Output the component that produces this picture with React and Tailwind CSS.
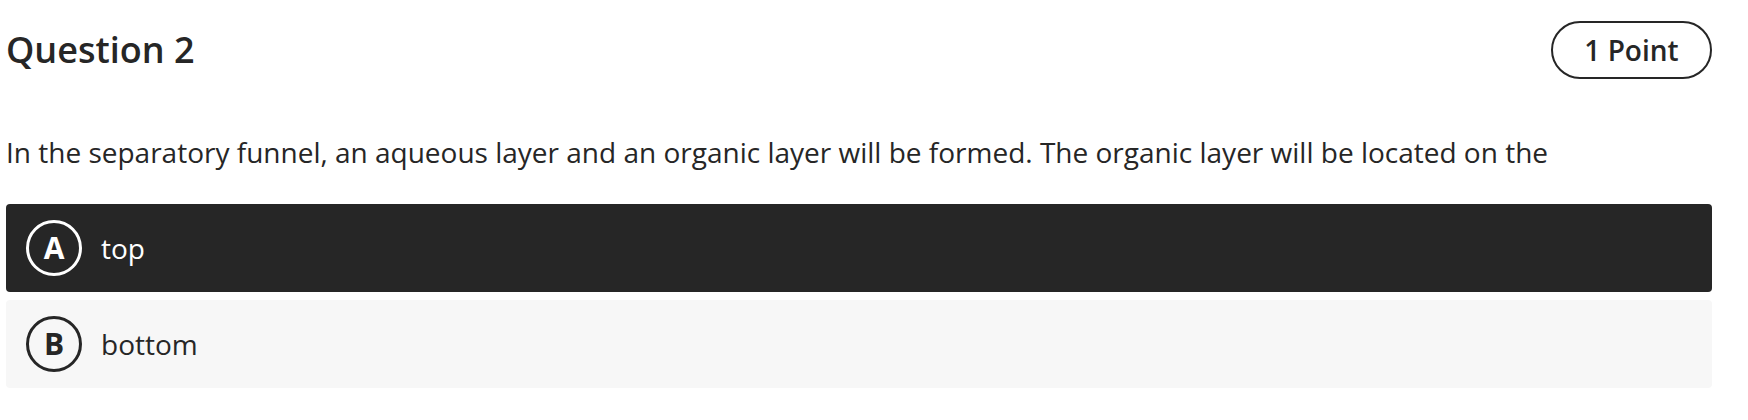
export default function App() {
  const font = { fontFamily: '"Open Sans", "Noto Sans", sans-serif' };
  return (
    <div className="bg-white w-[1748px] h-[420px] text-[#262626]" style={font}>
      <div className="ml-[6px] w-[1706px] pt-[21px]">
        <div className="flex items-center justify-between">
          <h2 className="text-[36px] font-semibold leading-[48px]">Question 2</h2>
          <div className="h-[58px] w-[161px] rounded-full border-2 border-[#262626] flex items-center justify-center text-[28px] font-semibold">
            1 Point
          </div>
        </div>
        <p className="mt-[53px] text-[28px] leading-[40px]">
          In the separatory funnel, an aqueous layer and an organic layer will be formed. The organic layer will be located on the
        </p>
        <div className="mt-[32px] flex flex-col gap-[8px]">
          <div className="h-[88px] rounded-[4px] bg-[#262626] flex items-center pl-[20px] gap-[19px]">
            <div className="w-[56px] h-[56px] rounded-full border-[3px] border-white flex items-center justify-center text-white text-[30px] font-bold leading-none">
              A
            </div>
            <span className="text-white text-[28px]">top</span>
          </div>
          <div className="h-[88px] rounded-[4px] bg-[#f7f7f7] flex items-center pl-[20px] gap-[19px]">
            <div className="w-[56px] h-[56px] rounded-full border-[3px] border-[#262626] flex items-center justify-center text-[#262626] text-[30px] font-bold leading-none">
              B
            </div>
            <span className="text-[#262626] text-[28px]">bottom</span>
          </div>
        </div>
      </div>
    </div>
  );
}
